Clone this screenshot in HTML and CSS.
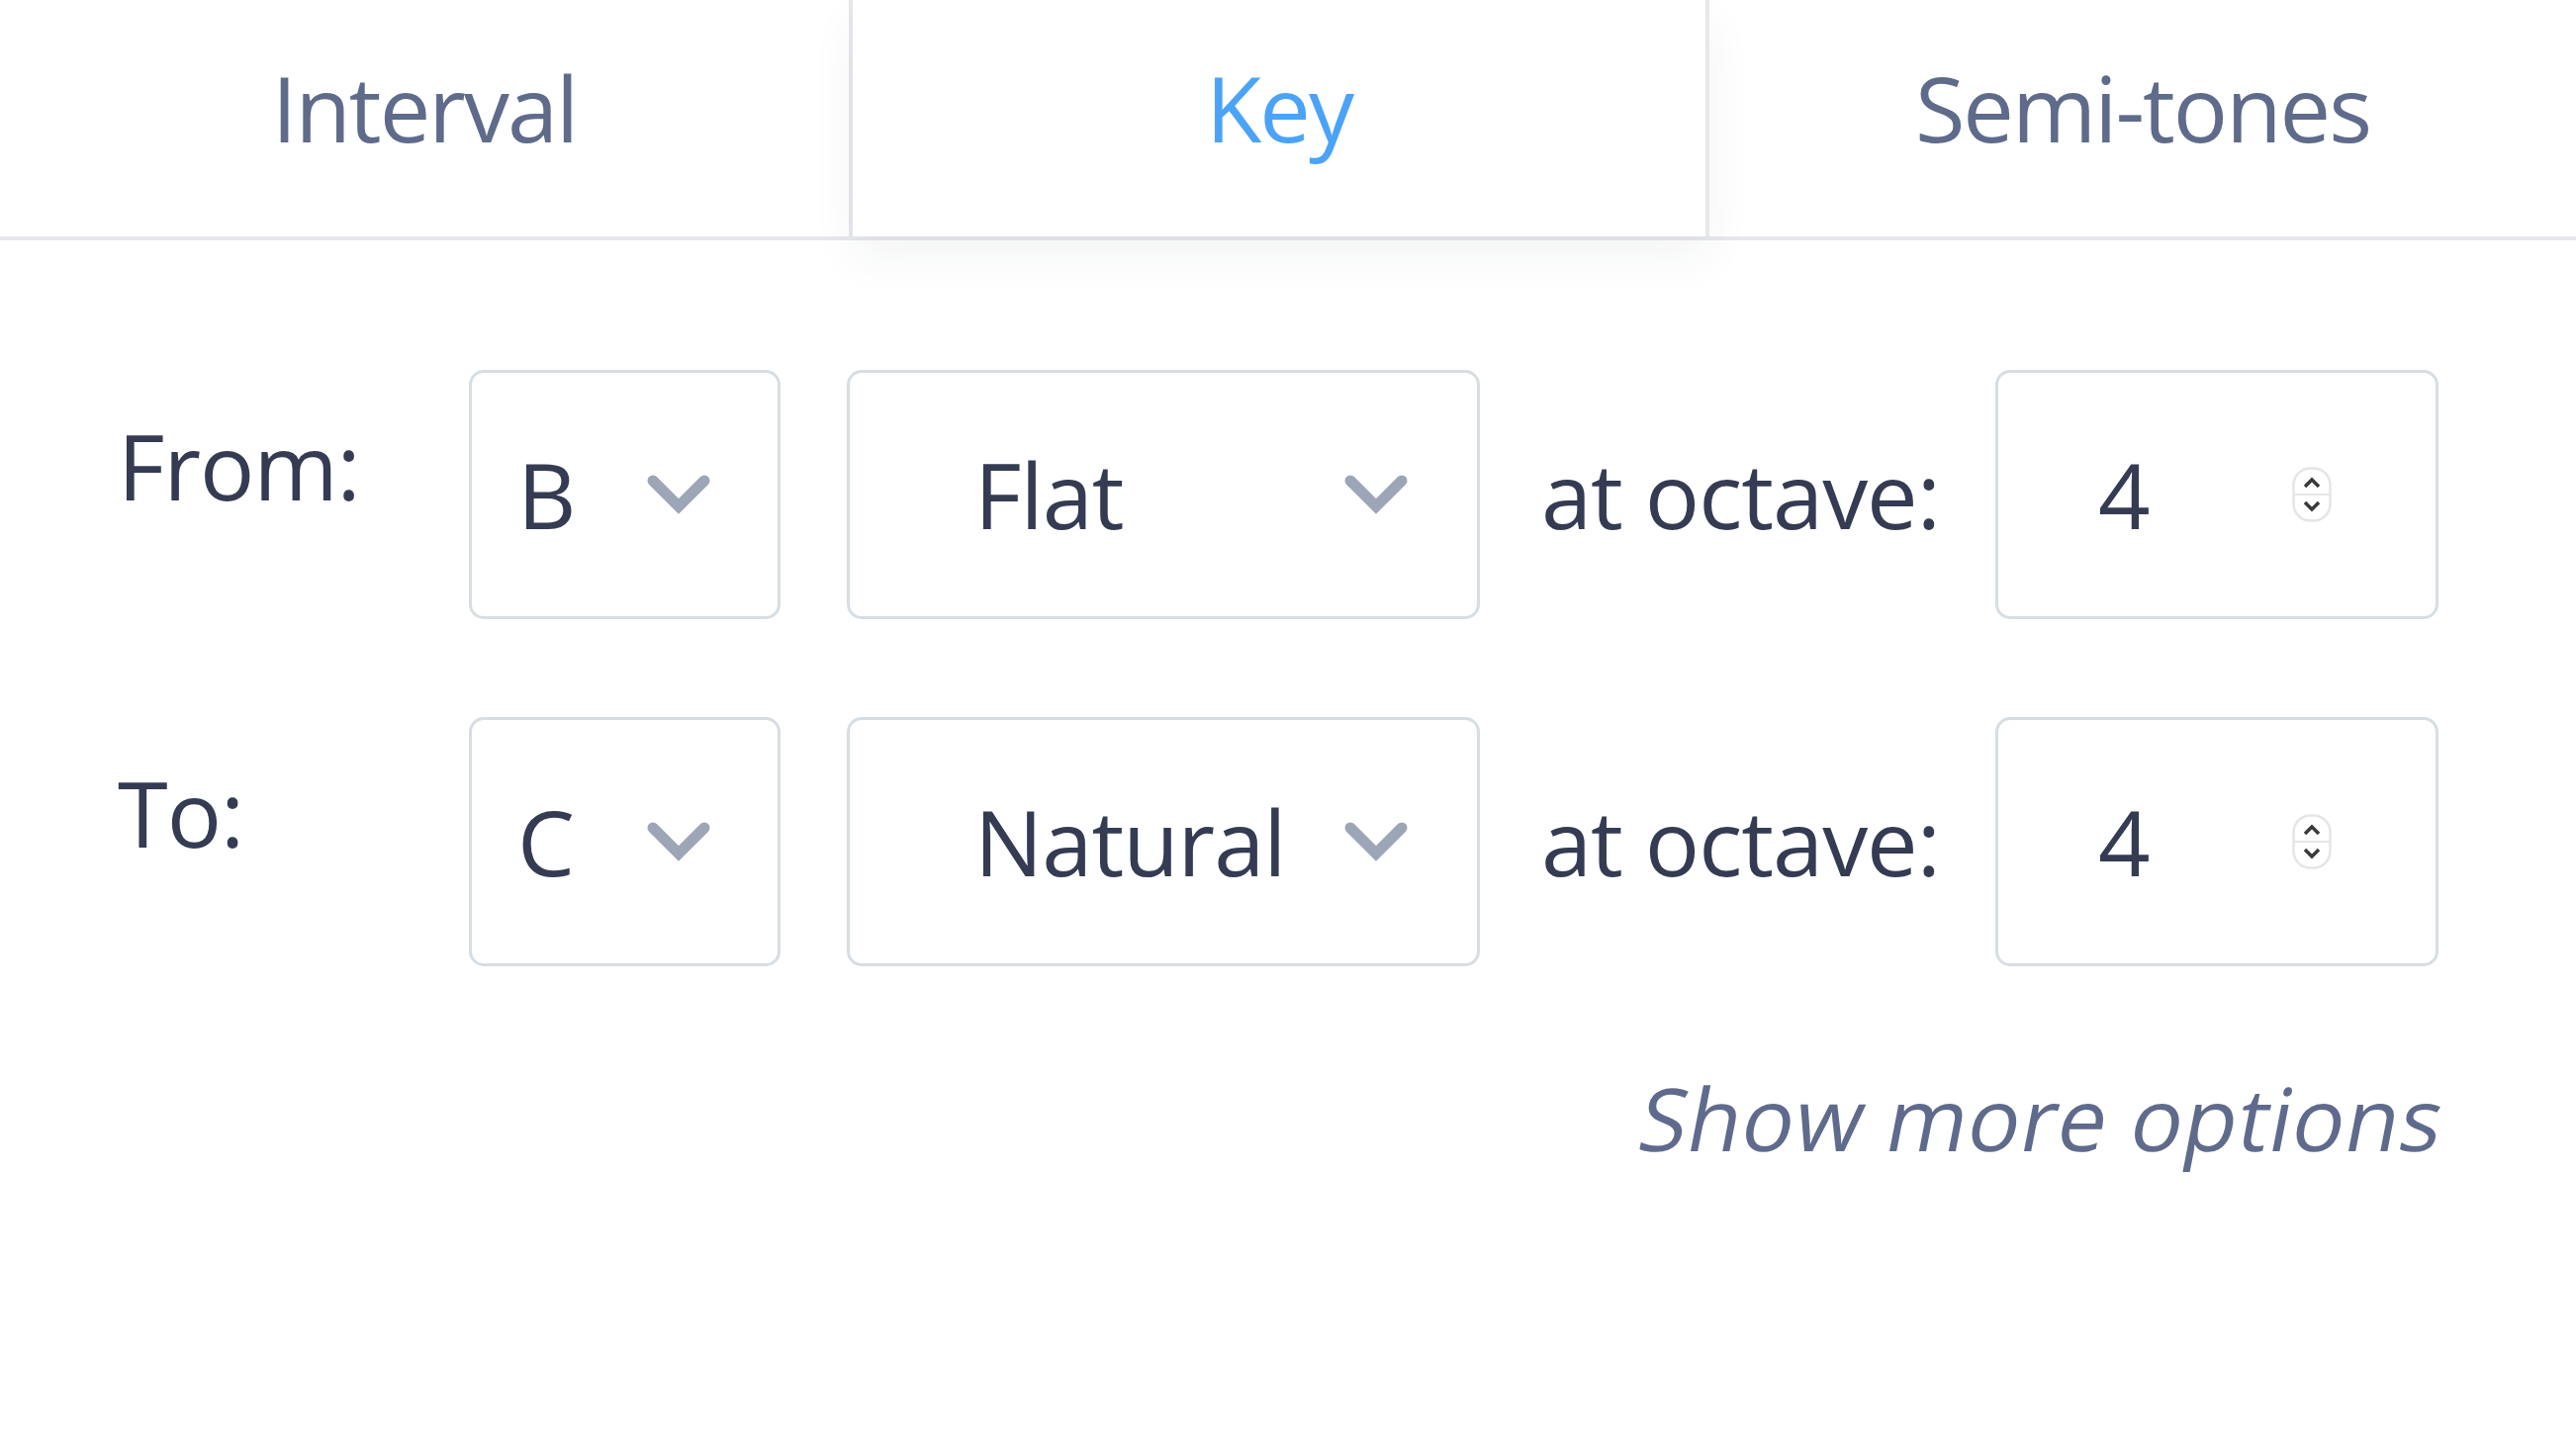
FILE: index.html
```html
<!DOCTYPE html>
<html lang="en">
<head>
<meta charset="utf-8">
<title>Interval calculator</title>
<link rel="stylesheet" href="styles.css">
</head>
<body>
<div class="panel">
  <nav class="tabs">
    <div class="tab first">Interval</div>
    <div class="tab active">Key</div>
    <div class="tab last">Semi-tones</div>
  </nav>
  <div class="form">
    <div class="row">
      <div class="label">From:</div>
      <div class="select note"><span class="value">B</span><svg class="chev" viewBox="0 0 66 42"><polyline points="7,7 33,33 59,7"/></svg></div>
      <div class="select accidental"><span class="value">Flat</span><svg class="chev" viewBox="0 0 66 42"><polyline points="7,7 33,33 59,7"/></svg></div>
      <div class="at">at octave:</div>
      <div class="number"><span class="value">4</span><svg class="spin" viewBox="0 0 40 56"><rect x="1.5" y="1.5" width="37" height="53" rx="17"/><line x1="2" y1="28" x2="38" y2="28"/><polyline class="arr" points="13,20 20,13 27,20"/><polyline class="arr" points="13,36 20,43 27,36"/></svg></div>
    </div>
    <div class="row">
      <div class="label">To:</div>
      <div class="select note"><span class="value">C</span><svg class="chev" viewBox="0 0 66 42"><polyline points="7,7 33,33 59,7"/></svg></div>
      <div class="select accidental"><span class="value">Natural</span><svg class="chev" viewBox="0 0 66 42"><polyline points="7,7 33,33 59,7"/></svg></div>
      <div class="at">at octave:</div>
      <div class="number"><span class="value">4</span><svg class="spin" viewBox="0 0 40 56"><rect x="1.5" y="1.5" width="37" height="53" rx="17"/><line x1="2" y1="28" x2="38" y2="28"/><polyline class="arr" points="13,20 20,13 27,20"/><polyline class="arr" points="13,36 20,43 27,36"/></svg></div>
    </div>
    <div class="more"><span class="more-link">Show more options</span></div>
  </div>
</div>
</body>
</html>
```
FILE: styles.css
```css
html, body {
  margin: 0;
  padding: 0;
  background: #ffffff;
}
body {
  font-family: "Open Sans", "Noto Sans", sans-serif;
  color: #343b53;
}
.panel {
  width: 2604px;
}
.tabs {
  display: flex;
  border-bottom: 4px solid #e7e8ec;
}
.tab {
  box-sizing: border-box;
  height: 239px;
  padding-top: 46px;
  text-align: center;
  font-size: 92px;
  line-height: 1.362;
  letter-spacing: -2px;
  color: #5f6b8b;
  background: #ffffff;
}
.tab.first {
  width: 862px;
  border-right: 4px solid #e7e8ec;
}
.tab.active {
  width: 866px;
  border-right: 4px solid #e7e8ec;
  position: relative;
  z-index: 1;
  color: #4ba3f8;
  box-shadow: 0 20px 44px rgba(40, 50, 70, 0.055);
}
.tab.last {
  flex: 1;
}
.form {
  padding: 131px 139px 0 119px;
}
.row {
  display: flex;
  align-items: center;
  height: 252px;
  margin-bottom: 99px;
  font-size: 92px;
  line-height: 1.362;
  letter-spacing: -1px;
}
.row + .row {
  margin-bottom: 0;
}
.label {
  width: 355px;
  align-self: flex-start;
  padding-top: 34px;
}
.select, .number {
  box-sizing: border-box;
  height: 252px;
  border: 3px solid #d6dde3;
  border-radius: 15px;
  display: flex;
  align-items: center;
  background: #fff;
}
.select.note {
  width: 315px;
  padding: 0 67px 0 46px;
  margin-right: 67px;
}
.select.accidental {
  width: 640px;
  padding: 0 69px 0 126px;
}
.chev {
  width: 66px;
  height: 42px;
  margin-left: auto;
  fill: none;
  stroke: #9ca6b6;
  stroke-width: 11;
  stroke-linecap: round;
  stroke-linejoin: miter;
}
.at {
  margin-left: 62px;
}
.number {
  width: 448px;
  margin-left: auto;
  padding: 0 105px 0 101px;
}
.spin {
  width: 40px;
  height: 56px;
  margin-left: auto;
}
.spin rect {
  fill: #ffffff;
  stroke: #e4e5e7;
  stroke-width: 2.5;
}
.spin line {
  stroke: #e4e5e7;
  stroke-width: 2;
}
.spin .arr {
  fill: none;
  stroke: #3a3a3a;
  stroke-width: 3.5;
}
.more {
  margin-top: 94px;
  text-align: right;
  font-size: 88px;
  line-height: 1.362;
  color: #5f6b8c;
}
.more-link {
  display: inline-block;
  transform: skewX(-11deg);
  transform-origin: 0 75%;
  letter-spacing: 0.8px;
}
```
